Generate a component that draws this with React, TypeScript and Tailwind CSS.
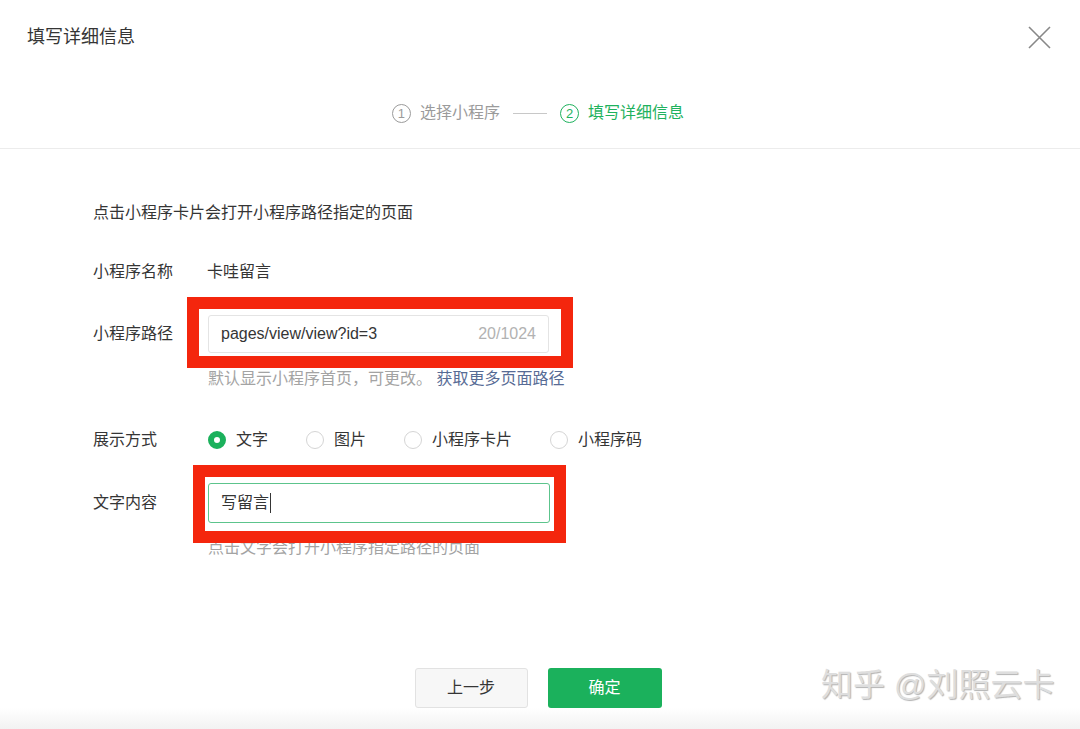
import type { FC } from "react";

const font = "font-['Liberation_Sans','Noto_Sans_CJK_SC',sans-serif]";

const StepDot: FC<{ n: number; active?: boolean }> = ({ n, active }) => (
  <span
    className={`flex h-[19px] w-[19px] items-center justify-center rounded-full border text-[13px] leading-none ${
      active ? "border-[#1fb25e] text-[#1fb25e]" : "border-[#9b9b9b] text-[#9b9b9b]"
    }`}
  >
    {n}
  </span>
);

const Radio: FC<{ label: string; checked?: boolean }> = ({ label, checked }) => (
  <label className="flex items-center gap-[10px]">
    <span
      className={`h-[18px] w-[18px] rounded-full bg-white ${
        checked ? "border-[6px] border-[#1bb15c]" : "border border-[#d5d5d5]"
      }`}
    />
    <span className="text-[16px] text-[#353535]">{label}</span>
  </label>
);

export default function App() {
  return (
    <div className={`relative flex h-[729px] w-[1080px] flex-col overflow-hidden bg-white ${font}`}>
      {/* ── Dialog header ── */}
      <div className="flex h-[74px] items-center justify-between pl-[27px] pr-[29px]">
        <h1 className="text-[18px] text-[#353535]">填写详细信息</h1>
        <svg width="23" height="23" viewBox="0 0 23 23" className="text-[#888]">
          <path d="M1 1 L22 22 M22 1 L1 22" stroke="currentColor" strokeWidth="1.6" fill="none" />
        </svg>
      </div>

      {/* ── Steps ── */}
      <div className="flex h-[75px] items-center justify-center border-b border-[#ececec] pt-[4px] pr-[4px] text-[16px]">
        <StepDot n={1} />
        <span className="ml-[9px] text-[#9b9b9b]">选择小程序</span>
        <span className="mx-[13px] h-px w-[34px] bg-[#c8c8c8]" />
        <StepDot n={2} active />
        <span className="ml-[9px] text-[#1fb25e]">填写详细信息</span>
      </div>

      {/* ── Form ── */}
      <div className="flex flex-1 flex-col pl-[93px] text-[16px] leading-[24px] text-[#353535]">
        <p className="mt-[52px]">点击小程序卡片会打开小程序路径指定的页面</p>

        <div className="mt-[35px] flex">
          <span className="w-[114px]">小程序名称</span>
          <span>卡哇留言</span>
        </div>

        <div className="mt-[31px] flex items-center">
          <span className="w-[115px]">小程序路径</span>
          <div className="flex h-[38px] w-[341px] items-center justify-between rounded-[3px] border border-[#e4e4e4] px-[12px]">
            <span>pages/view/view?id=3</span>
            <span className="text-[#b2b2b2]">20/1024</span>
          </div>
        </div>
        <p className="ml-[115px] mt-[14px] text-[#a3a3a3]">
          默认显示小程序首页，可更改。 <span className="text-[#576b95]">获取更多页面路径</span>
        </p>

        <div className="mt-[37px] flex items-center">
          <span className="w-[115px]">展示方式</span>
          <div className="flex items-center gap-[38px]">
            <Radio label="文字" checked />
            <Radio label="图片" />
            <Radio label="小程序卡片" />
            <Radio label="小程序码" />
          </div>
        </div>

        <div className="mt-[31px] flex items-center">
          <span className="w-[115px]">文字内容</span>
          <div className="flex h-[40px] w-[342px] items-center rounded-[3px] border border-[#5cc48c] px-[12px]">
            <span>写留言</span>
            <span className="ml-px h-[20px] w-px bg-[#353535]" />
          </div>
        </div>
        <p className="ml-[115px] mt-[13px] text-[#a3a3a3]">点击文字会打开小程序指定路径的页面</p>

        {/* ── Footer buttons ── */}
        <div className="mt-[108px] flex justify-center gap-[20px] pr-[97px] text-[16px]">
          <button className="h-[40px] w-[113px] rounded-[3px] border border-[#e2e2e2] bg-[#f7f7f7] text-[#353535]">
            上一步
          </button>
          <button className="h-[40px] w-[114px] rounded-[3px] bg-[#1bb15c] text-white">确定</button>
        </div>
      </div>
      <div className="h-[21px] bg-gradient-to-b from-white to-[#f2f2f2]" />

      {/* ── Red highlight frames ── */}
      <div className="absolute left-[187px] top-[297px] h-[71px] w-[386px] border-[12px] border-[#f4260d]" />
      <div className="absolute left-[193px] top-[465px] h-[78px] w-[373px] border-[12px] border-[#f4260d]" />

      {/* ── Watermark ── */}
      <div className="absolute left-[821px] top-[664px] text-[32px] leading-[42px] text-[#dedede] [text-shadow:1px_1px_1px_rgba(0,0,0,0.3)]">
        知乎 @刘照云卡
      </div>
    </div>
  );
}
